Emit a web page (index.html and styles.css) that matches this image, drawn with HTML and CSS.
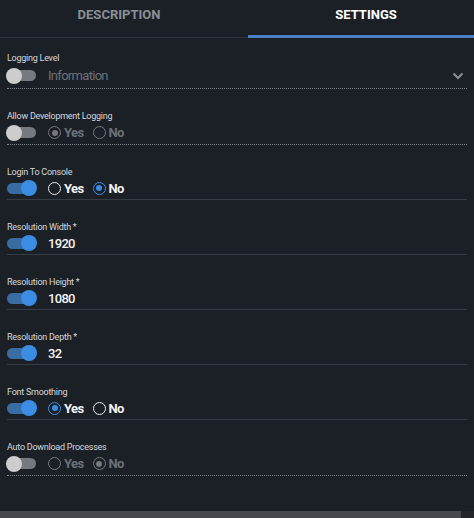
FILE: index.html
```html
<!DOCTYPE html>
<html>
<head>
<meta charset="utf-8">
<link rel="stylesheet" href="styles.css">
</head>
<body>
<div class="page">
  <div class="tabs">
    <div class="tab tab-left">DESCRIPTION</div>
    <div class="tab tab-right active">SETTINGS</div>
  </div>
  <div class="settings">
    <div class="field select disabled">
      <div class="label">Logging Level</div>
      <div class="row">
        <span class="toggle off"><span class="knob"></span></span>
        <span class="value muted normal">Information</span>
        <svg class="chevron" width="12" height="8" viewBox="0 0 12 8"><path d="M1.5 1.5 L6 6 L10.5 1.5" fill="none" stroke="#8b9096" stroke-width="2"/></svg>
      </div>
    </div>
    <div class="field disabled">
      <div class="label">Allow Development Logging</div>
      <div class="row">
        <span class="toggle off"><span class="knob"></span></span>
        <span class="radio dis checked"></span><span class="opt muted">Yes</span>
        <span class="radio dis"></span><span class="opt muted">No</span>
      </div>
    </div>
    <div class="field">
      <div class="label">Login To Console</div>
      <div class="row">
        <span class="toggle on"><span class="knob"></span></span>
        <span class="radio"></span><span class="opt">Yes</span>
        <span class="radio checked"></span><span class="opt">No</span>
      </div>
    </div>
    <div class="field">
      <div class="label">Resolution Width *</div>
      <div class="row">
        <span class="toggle on"><span class="knob"></span></span>
        <span class="value">1920</span>
      </div>
    </div>
    <div class="field">
      <div class="label">Resolution Height *</div>
      <div class="row">
        <span class="toggle on"><span class="knob"></span></span>
        <span class="value">1080</span>
      </div>
    </div>
    <div class="field">
      <div class="label">Resolution Depth *</div>
      <div class="row">
        <span class="toggle on"><span class="knob"></span></span>
        <span class="value">32</span>
      </div>
    </div>
    <div class="field">
      <div class="label">Font Smoothing</div>
      <div class="row">
        <span class="toggle on"><span class="knob"></span></span>
        <span class="radio checked"></span><span class="opt">Yes</span>
        <span class="radio"></span><span class="opt">No</span>
      </div>
    </div>
    <div class="field disabled">
      <div class="label">Auto Download Processes</div>
      <div class="row">
        <span class="toggle off"><span class="knob"></span></span>
        <span class="radio dis"></span><span class="opt muted">Yes</span>
        <span class="radio dis checked"></span><span class="opt muted">No</span>
      </div>
    </div>
  </div>
  <div class="hscroll">
    <div class="thumb"></div>
    <div class="corner"></div>
  </div>
</div>
</body>
</html>
```

FILE: styles.css
```css
* { box-sizing: border-box; }
html, body {
  margin: 0;
  padding: 0;
  background: #1b2027;
}
body {
  font-family: Roboto, "Noto Sans", "Liberation Sans", sans-serif;
  color: #e8e9ea;
}
.page {
  height: 518px;
  display: flex;
  flex-direction: column;
  overflow: hidden;
}
.tabs {
  display: grid;
  grid-template-columns: 248px 1fr;
}
.tab {
  height: 38px;
  line-height: 29px;
  font-size: 13px;
  font-weight: 700;
  text-align: center;
  color: #8a8f95;
  border-bottom: 1px solid #2f353c;
}
.tab-left { padding-right: 10px; }
.tab-right { padding-left: 10px; }
.tab.active {
  color: #ffffff;
  border-bottom: 3px solid #4a7ec4;
}
.settings {
  padding: 0 7px;
}
.field {
  padding-top: 20px;
  border-bottom: 1px solid #363c44;
}
.field:first-child { padding-top: 13px; }
.field.disabled { border-bottom: 1px dotted #80858b; }
.label {
  height: 12px;
  padding-top: 2px;
  line-height: 11px;
  font-size: 9px;
  letter-spacing: -0.25px;
  color: #d6d8db;
}
.row {
  height: 22px;
  display: flex;
  align-items: center;
}
.field.disabled .row { height: 23px; }
.field.select .row { height: 25px; }
.toggle {
  position: relative;
  width: 29px;
  height: 11px;
  border-radius: 6px;
  margin-right: 12px;
  flex: none;
}
.toggle .knob {
  position: absolute;
  top: -2.5px;
  width: 16px;
  height: 16px;
  border-radius: 50%;
}
.toggle.off { background: #76797d; }
.toggle.off .knob { left: -1px; background: #cdcdcd; }
.toggle.on { background: #3a6ca4; }
.toggle.on .knob { right: -1px; background: #3b8de4; }
.value {
  font-size: 13px;
  font-weight: 500;
  letter-spacing: -0.7px;
  color: #f2f2f2;
}
.value.normal { font-weight: 400; }
.muted { color: #6c7177; }
.chevron { margin-left: auto; margin-right: 3px; }
.radio {
  width: 13px;
  height: 13px;
  border-radius: 50%;
  border: 1.5px solid #eeeeee;
  margin-right: 3px;
  flex: none;
  display: flex;
  align-items: center;
  justify-content: center;
}
.radio.checked { border-color: #3b8de4; }
.radio.checked::after {
  content: "";
  width: 6px;
  height: 6px;
  border-radius: 50%;
  background: #3b8de4;
}
.radio.dis { border-color: #75787c; }
.radio.dis.checked::after { background: #75787c; }
.opt {
  font-size: 13px;
  font-weight: 700;
  letter-spacing: -0.6px;
  color: #f2f2f2;
  margin-right: 9px;
}
.opt.muted { color: #6c7177; }
.hscroll {
  margin-top: auto;
  height: 7px;
  display: flex;
}
.thumb {
  width: 461px;
  background: #45494e;
}
.corner {
  flex: 1;
  background: #22262b;
}
```
